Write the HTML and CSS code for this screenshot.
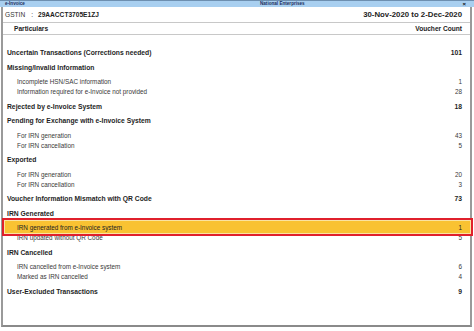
FILE: index.html
```html
<!DOCTYPE html>
<html lang="en">
<head>
    <meta charset="UTF-8">
    <meta name="viewport" content="width=device-width, initial-scale=1.0">
    <title>e-Invoice</title>
    <link rel="stylesheet" href="styles.css">
</head>
<body>

    <div class="titlebar">
        <span class="t-left">e-Invoice</span>
        <span class="t-mid">National Enterprises</span>
        <span class="t-close">×</span>
    </div>

    <div class="window">
        <div class="gst-row">
            <div class="gstin"><span class="lbl">GSTIN</span><span class="colon">:</span><b>29AACCT3705E1ZJ</b></div>
            <div class="period">30-Nov-2020 to 2-Dec-2020</div>
        </div>
        <div class="col-head">
            <span>Particulars</span>
            <span>Voucher Count</span>
        </div>

        <div class="list">
            <div class="row group"><span>Uncertain Transactions (Corrections needed)</span><span>101</span></div>

            <div class="row group"><span>Missing/Invalid Information</span><span></span></div>
            <div class="row item"><span>Incomplete HSN/SAC information</span><span>1</span></div>
            <div class="row item"><span>Information required for e-Invoice not provided</span><span>28</span></div>

            <div class="row group"><span>Rejected by e-Invoice System</span><span>18</span></div>

            <div class="row group"><span>Pending for Exchange with e-Invoice System</span><span></span></div>
            <div class="row item"><span>For IRN generation</span><span>43</span></div>
            <div class="row item"><span>For IRN cancellation</span><span>5</span></div>

            <div class="row group"><span>Exported</span><span></span></div>
            <div class="row item"><span>For IRN generation</span><span>20</span></div>
            <div class="row item"><span>For IRN cancellation</span><span>3</span></div>

            <div class="row group"><span>Voucher Information Mismatch with QR Code</span><span>73</span></div>

            <div class="row group"><span>IRN Generated</span><span></span></div>
            <div class="row item selected"><span>IRN generated from e-Invoice system</span><span>1</span></div>
            <div class="row item"><span>IRN updated without QR Code</span><span>5</span></div>

            <div class="row group"><span>IRN Cancelled</span><span></span></div>
            <div class="row item"><span>IRN cancelled from e-Invoice system</span><span>6</span></div>
            <div class="row item"><span>Marked as IRN cancelled</span><span>4</span></div>

            <div class="row group"><span>User-Excluded Transactions</span><span>9</span></div>
        </div>
    </div>

</body>
</html>
```

FILE: styles.css
```css
body {
    margin: 0;
    background: #fff;
    color: #222;
    font-family: "Liberation Sans", Arial, sans-serif;
}
.titlebar {
    display: grid;
    grid-template-columns: 260px 1fr auto;
    align-items: center;
    width: 474px;
    height: 7px;
    box-sizing: border-box;
    border-top: 1px solid #6d8fb0;
    background: #a8cff0;
    color: #1b2d5c;
    font-size: 4.6px;
    font-weight: bold;
    line-height: 6px;
}
.t-left {
    padding-left: 5px;
}
.t-close {
    padding-right: 8px;
    font-size: 6px;
    color: #111;
}
.window {
    display: flex;
    flex-direction: column;
    width: 471px;
    height: 320px;
    margin-left: 1px;
    box-sizing: border-box;
    border-left: 2px solid #9a9a9a;
    border-right: 2px solid #9a9a9a;
    border-bottom: 2px solid #8a8a8a;
}
.gst-row {
    display: flex;
    justify-content: space-between;
    align-items: center;
    height: 15px;
    padding: 0 8px 0 2px;
    border-bottom: 1px solid #c8c8c8;
}
.gstin {
    font-size: 6.6px;
}
.gstin .lbl {
    color: #333;
}
.gstin .colon {
    margin: 0 5px 0 6px;
}
.period {
    font-size: 7.8px;
    font-weight: bold;
}
.col-head {
    display: flex;
    justify-content: space-between;
    align-items: center;
    height: 11px;
    padding: 0 8px 0 11px;
    border-bottom: 1px solid #c8c8c8;
    font-size: 6.6px;
    font-weight: bold;
}
.list {
    flex: 1;
    padding: 8.5px 8px 0 4px;
}
.row {
    display: flex;
    justify-content: space-between;
    height: 10px;
    line-height: 10px;
}
.group {
    margin-top: 4.5px;
    font-size: 6.75px;
    font-weight: bold;
    color: #1e1e1e;
}
.item {
    padding-left: 10px;
    font-size: 6.35px;
    color: #3a3a3a;
}
.group + .item {
    margin-top: 4.5px;
}
.selected {
    position: relative;
    z-index: 1;
    color: #222;
}
.selected::before {
    content: "";
    position: absolute;
    top: -5px;
    bottom: -3px;
    left: -5px;
    right: -11px;
    z-index: -1;
    border: 2px solid #e0202c;
    background: #f9c232;
    box-shadow: inset 0 0 0 1px #fbe3a0;
}
```
